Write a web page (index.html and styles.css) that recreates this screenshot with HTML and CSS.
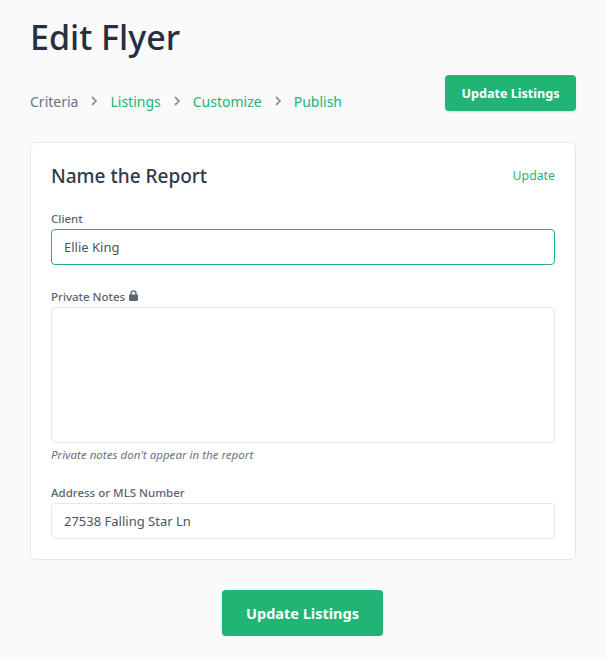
FILE: index.html
```html
<!DOCTYPE html>
<html>
<head>
<title>Edit Flyer</title>
<link rel="stylesheet" href="styles.css">
</head>
<body>
<div class="page">
  <h1 class="title">Edit Flyer</h1>

  <div class="topbar">
    <nav class="steps">
      <span class="step">Criteria</span>
      <svg class="chevron" viewBox="0 0 8 12"><path d="M2 2l4 4-4 4"/></svg>
      <a class="step link" href="#">Listings</a>
      <svg class="chevron" viewBox="0 0 8 12"><path d="M2 2l4 4-4 4"/></svg>
      <a class="step link" href="#">Customize</a>
      <svg class="chevron" viewBox="0 0 8 12"><path d="M2 2l4 4-4 4"/></svg>
      <a class="step link" href="#">Publish</a>
    </nav>
    <button class="btn btn-small">Update Listings</button>
  </div>

  <div class="card">
    <div class="card-head">
      <h2 class="card-title">Name the Report</h2>
      <a class="link update" href="#">Update</a>
    </div>

    <label class="label label-client">Client</label>
    <input class="field field-focus" type="text" value="Ellie King">

    <label class="label label-notes">Private Notes
      <svg class="lock" viewBox="0 0 10 12"><path d="M1.5 5V3.6a3.5 3.3 0 0 1 7 0V5h.2c.7 0 1.3.5 1.3 1.2v4.6c0 .7-.6 1.2-1.3 1.2H1.3C.6 12 0 11.500 0 10.800V6.200C0 5.500.6 5 1.300 5zm1.500 0h4V3.600a2 2 0 0 0-4 0z"/></svg>
    </label>
    <textarea class="field notes"></textarea>
    <p class="hint">Private notes don't appear in the report</p>

    <label class="label label-address">Address or MLS Number</label>
    <input class="field" type="text" value="27538 Falling Star Ln">
  </div>

  <div class="bottom">
    <button class="btn btn-large">Update Listings</button>
  </div>
</div>
</body>
</html>
```

FILE: styles.css
```css
* {
  box-sizing: border-box;
}
body {
  margin: 0;
  background: #fafafa;
  font-family: "Noto Sans", sans-serif;
  color: #252f3f;
}
.page {
  padding: 0 29px 0 30px;
}
.title {
  margin: 0;
  padding-top: 12px;
  font-size: 34px;
  line-height: 50px;
  font-weight: 500;
}
.topbar {
  display: flex;
  justify-content: space-between;
  align-items: flex-start;
  margin-top: 13px;
  height: 67px;
}
.steps {
  display: flex;
  align-items: center;
  margin-top: 14px;
  height: 24px;
  font-size: 14px;
}
.step {
  color: #6b7280;
}
.link {
  color: #20b574;
  text-decoration: none;
}
.chevron {
  width: 8px;
  height: 12px;
  margin: 0 12px;
  fill: none;
  stroke: #8f96a3;
  stroke-width: 1.8;
}
.btn {
  border: 0;
  border-radius: 4px;
  background: #20b574;
  color: #fff;
  font-family: "Noto Sans", sans-serif;
  font-weight: 700;
  box-shadow: 0 1px 2px rgba(0, 0, 0, 0.15);
}
.btn-small {
  width: 131px;
  height: 36px;
  font-size: 12.6px;
}
.btn-large {
  width: 161px;
  height: 46px;
  font-size: 14.5px;
}
.card {
  height: 418px;
  padding: 0 20px;
  background: #fff;
  border: 1px solid #e5e7eb;
  border-radius: 6px;
}
.card-head {
  display: flex;
  justify-content: space-between;
  align-items: center;
  height: 65px;
}
.card-title {
  margin: 0;
  font-size: 19px;
  font-weight: 500;
  color: #2f3a4a;
}
.update {
  font-size: 12.3px;
}
.label {
  display: block;
  font-size: 11.5px;
  line-height: 16px;
  font-weight: 500;
  color: #5b6472;
}
.label-client {
  margin-top: 3px;
  margin-bottom: 2px;
}
.label-notes {
  margin-top: 24px;
  margin-bottom: 2px;
}
.label-address {
  margin-top: 22px;
  margin-bottom: 2px;
}
.lock {
  width: 9px;
  height: 11px;
  margin-left: 1px;
  fill: #5b6472;
  fill-rule: evenodd;
}
.field {
  display: block;
  width: 100%;
  height: 36px;
  padding: 0 12px;
  background: #fff;
  border: 1px solid #e5e7eb;
  border-radius: 4px;
  font-family: "Noto Sans", sans-serif;
  font-size: 13px;
  color: #4b5563;
  outline: none;
}
.field-focus {
  border-color: #20b574;
}
.notes {
  height: 136px;
  resize: none;
}
.hint {
  margin: 4px 0 0;
  font-size: 11.55px;
  line-height: 16px;
  font-style: italic;
  color: #6b7280;
}
.bottom {
  display: flex;
  justify-content: center;
  margin-top: 30px;
  padding-right: 1px;
}
```
